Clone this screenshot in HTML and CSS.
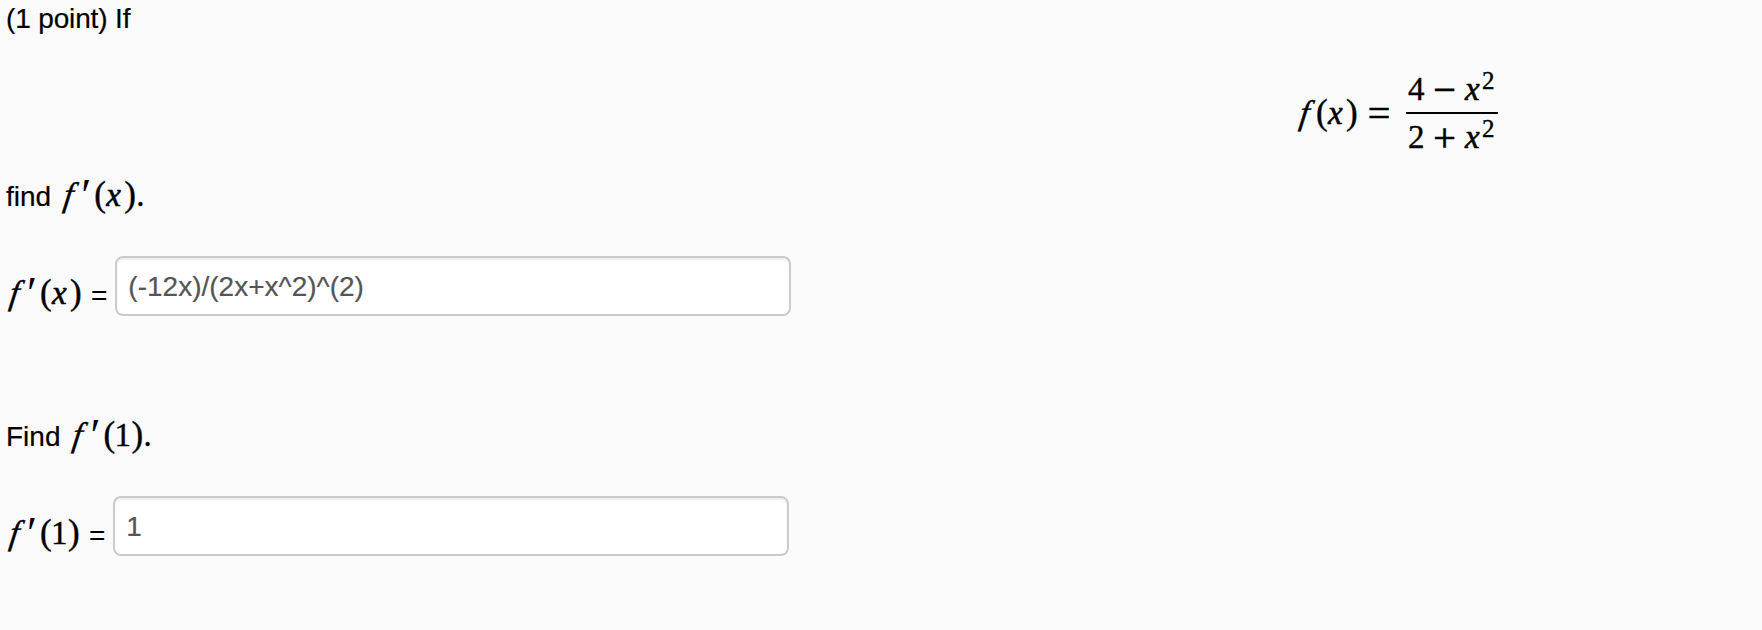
FILE: index.html
```
<!DOCTYPE html>
<html lang="en">
<head>
  <meta charset="UTF-8">
  <title>Derivative problem</title>
  <link rel="stylesheet" href="styles.css">
</head>
<body>

<div class="problem">
  <p class="intro">(1 point) If</p>

  <div class="display">
    <span class="math"><i class="fn">f</i><span class="paren">(</span><i class="x">x</i><span class="paren">)</span><span class="op eq">=</span></span>
    <span class="frac">
      <span class="num math"><span class="digit">4</span><span class="op">−</span><i class="x">x</i><span class="sup">2</span></span>
      <span class="den math"><span class="digit">2</span><span class="op">+</span><i class="x">x</i><span class="sup">2</span></span>
    </span>
  </div>

  <p class="line find-fx"><span>find</span><span class="math"><i class="fn">f</i><span class="prime">′</span><span class="paren">(</span><i class="x">x</i><span class="paren">)</span><span class="dot">.</span></span></p>

  <div class="answer">
    <label class="line" for="ans1"><span class="math"><i class="fn">f</i><span class="prime">′</span><span class="paren">(</span><i class="x">x</i><span class="paren">)</span></span><span class="equals">=</span></label>
    <input type="text" id="ans1" value="(-12x)/(2x+x^2)^(2)">
  </div>

  <p class="line find-f1"><span>Find</span><span class="math"><i class="fn">f</i><span class="prime">′</span><span class="paren">(</span><span class="digit">1</span><span class="paren">)</span><span class="dot">.</span></span></p>

  <div class="answer">
    <label class="line" for="ans2"><span class="math"><i class="fn">f</i><span class="prime">′</span><span class="paren">(</span><span class="digit">1</span><span class="paren">)</span></span><span class="equals">=</span></label>
    <input type="text" id="ans2" value="1">
  </div>
</div>

</body>
</html>
```
FILE: styles.css
```
body {
  margin: 0;
  background: #fafafa;
  color: #000;
  font-family: "Liberation Sans", Arial, sans-serif;
  font-size: 28px;
  line-height: 40px;
  -webkit-text-stroke: 0.2px;
}
p {
  margin: 0;
}
.problem {
  padding: 1px 0 0 6px;
}
.intro {
  height: 37px;
  letter-spacing: -0.15px;
  line-height: 36px;
}

/* formulas */
.math {
  display: inline-flex;
  align-items: baseline;
  font-family: "Liberation Serif", "Times New Roman", serif;
  font-size: 33px;
  -webkit-text-stroke: 0.4px;
}
.fn {
  width: 16px;
  padding-left: 2px;
  font-size: 34px;
  transform: skewX(-8deg);
}
.paren {
  width: 11px;
  font-size: 35px;
}
.x {
  width: 18px;
  padding-left: 1px;
  -webkit-text-stroke-width: 0.6px;
}
.digit {
  width: 17px;
}
.prime {
  width: 13px;
  padding-left: 1px;
  font-size: 46px;
  line-height: 30px;
  transform: translateY(5px);
  -webkit-text-stroke-width: 0;
}
.dot {
  padding-left: 1px;
}
.op {
  width: 39px;
  text-align: center;
  font-size: 40px;
  line-height: 30px;
  -webkit-text-stroke-width: 0.7px;
  transform: translateY(3px);
}
.eq {
  width: 44px;
}
.sup {
  margin-left: -1px;
  font-size: 25px;
  line-height: 20px;
  transform: translateY(-11px);
}

.display {
  display: flex;
  align-items: center;
  height: 96px;
  margin: 28px 0 0 1292px;
}
.display > .math {
  margin-top: -2px;
}
.frac {
  display: flex;
  flex-direction: column;
  width: 92px;
  margin-left: 5px;
}
.num,
.den {
  height: 48px;
  padding: 3px 0 0 2px;
  box-sizing: border-box;
}
.num {
  border-bottom: 2px solid #000;
}

/* text rows */
.line {
  display: flex;
  align-items: baseline;
}
.find-fx,
.find-f1 {
  height: 40px;
}
.find-fx {
  margin-top: 13px;
}
.find-fx .math,
.find-f1 .math {
  margin-left: 11px;
}
.find-f1 {
  margin-top: 99px;
}
.answer {
  display: flex;
  height: 60px;
  margin-top: 41px;
}
.answer .line {
  margin-top: 17px;
  padding-left: 2px;
}
.equals {
  margin: 0 8px 0 10px;
  transform: translateY(1px);
}
.answer input {
  width: 676px;
  height: 60px;
  box-sizing: border-box;
  padding: 2px 11px 0;
  border: 2px solid #ccc;
  border-radius: 8px;
  background: #fff;
  box-shadow: inset 0 2px 2px rgba(0, 0, 0, 0.075);
  color: #555;
  font: 28px "Liberation Sans", Arial, sans-serif;
}
```
